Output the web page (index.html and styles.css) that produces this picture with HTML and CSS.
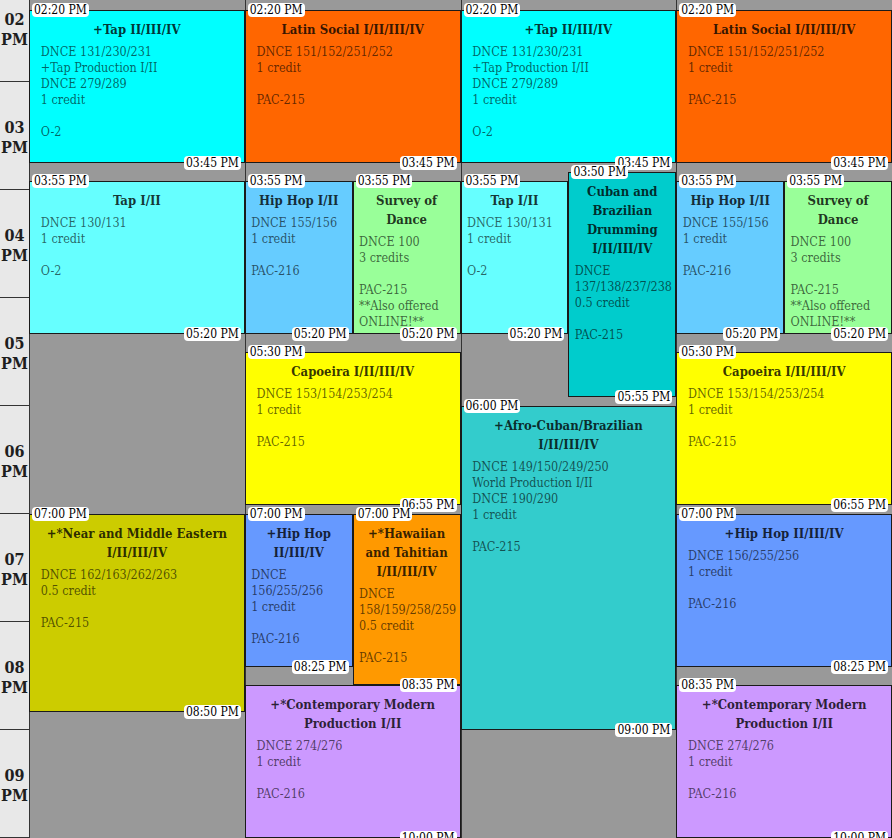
FILE: index.html
```html
<!DOCTYPE html>
<html lang="en">
<head>
<meta charset="utf-8">
<title>Dance Schedule</title>
<link rel="stylesheet" href="styles.css">
</head>
<body>
<div class="schedule">
  <div class="hour"><span>02</span><span>PM</span></div>
  <div class="hour"><span>03</span><span>PM</span></div>
  <div class="hour"><span>04</span><span>PM</span></div>
  <div class="hour"><span>05</span><span>PM</span></div>
  <div class="hour"><span>06</span><span>PM</span></div>
  <div class="hour"><span>07</span><span>PM</span></div>
  <div class="hour"><span>08</span><span>PM</span></div>
  <div class="hour"><span>09</span><span>PM</span></div>

  <div class="day d1"></div>
  <div class="day d2"></div>
  <div class="day d3"></div>
  <div class="day d4"></div>

  <div class="ev c-tap2" style="grid-row:5/22;grid-column:2/4">
    <span class="t s">02:20 PM</span>
    <div class="title">+Tap II/III/IV</div>
    <div class="info">DNCE 131/230/231<br>+Tap Production I/II<br>DNCE 279/289<br>1 credit<br><br>O-2</div>
    <span class="t e">03:45 PM</span>
  </div>
  <div class="ev c-latin" style="grid-row:5/22;grid-column:4/6">
    <span class="t s">02:20 PM</span>
    <div class="title">Latin Social I/II/III/IV</div>
    <div class="info">DNCE 151/152/251/252<br>1 credit<br><br>PAC-215</div>
    <span class="t e">03:45 PM</span>
  </div>
  <div class="ev c-tap2" style="grid-row:5/22;grid-column:6/8">
    <span class="t s">02:20 PM</span>
    <div class="title">+Tap II/III/IV</div>
    <div class="info">DNCE 131/230/231<br>+Tap Production I/II<br>DNCE 279/289<br>1 credit<br><br>O-2</div>
    <span class="t e">03:45 PM</span>
  </div>
  <div class="ev c-latin" style="grid-row:5/22;grid-column:8/10">
    <span class="t s">02:20 PM</span>
    <div class="title">Latin Social I/II/III/IV</div>
    <div class="info">DNCE 151/152/251/252<br>1 credit<br><br>PAC-215</div>
    <span class="t e">03:45 PM</span>
  </div>

  <div class="ev c-tap1" style="grid-row:24/41;grid-column:2/4">
    <span class="t s">03:55 PM</span>
    <div class="title">Tap I/II</div>
    <div class="info">DNCE 130/131<br>1 credit<br><br>O-2</div>
    <span class="t e">05:20 PM</span>
  </div>
  <div class="ev c-hh1" style="grid-row:24/41;grid-column:4/5">
    <span class="t s">03:55 PM</span>
    <div class="title">Hip Hop I/II</div>
    <div class="info">DNCE 155/156<br>1 credit<br><br>PAC-216</div>
    <span class="t e">05:20 PM</span>
  </div>
  <div class="ev c-survey" style="grid-row:24/41;grid-column:5/6">
    <span class="t s">03:55 PM</span>
    <div class="title">Survey of<br>Dance</div>
    <div class="info">DNCE 100<br>3 credits<br><br>PAC-215<br>**Also offered ONLINE!**</div>
    <span class="t e">05:20 PM</span>
  </div>
  <div class="ev c-tap1" style="grid-row:24/41;grid-column:6/7">
    <span class="t s">03:55 PM</span>
    <div class="title">Tap I/II</div>
    <div class="info">DNCE 130/131<br>1 credit<br><br>O-2</div>
    <span class="t e">05:20 PM</span>
  </div>
  <div class="ev c-cuban" style="grid-row:23/48;grid-column:7/8">
    <span class="t s">03:50 PM</span>
    <div class="title">Cuban and<br>Brazilian<br>Drumming<br>I/II/III/IV</div>
    <div class="info">DNCE<br>137/138/237/238<br>0.5 credit<br><br>PAC-215</div>
    <span class="t e">05:55 PM</span>
  </div>
  <div class="ev c-hh1" style="grid-row:24/41;grid-column:8/9">
    <span class="t s">03:55 PM</span>
    <div class="title">Hip Hop I/II</div>
    <div class="info">DNCE 155/156<br>1 credit<br><br>PAC-216</div>
    <span class="t e">05:20 PM</span>
  </div>
  <div class="ev c-survey" style="grid-row:24/41;grid-column:9/10">
    <span class="t s">03:55 PM</span>
    <div class="title">Survey of<br>Dance</div>
    <div class="info">DNCE 100<br>3 credits<br><br>PAC-215<br>**Also offered ONLINE!**</div>
    <span class="t e">05:20 PM</span>
  </div>

  <div class="ev c-capo" style="grid-row:43/60;grid-column:4/6">
    <span class="t s">05:30 PM</span>
    <div class="title">Capoeira I/II/III/IV</div>
    <div class="info">DNCE 153/154/253/254<br>1 credit<br><br>PAC-215</div>
    <span class="t e">06:55 PM</span>
  </div>
  <div class="ev c-capo" style="grid-row:43/60;grid-column:8/10">
    <span class="t s">05:30 PM</span>
    <div class="title">Capoeira I/II/III/IV</div>
    <div class="info">DNCE 153/154/253/254<br>1 credit<br><br>PAC-215</div>
    <span class="t e">06:55 PM</span>
  </div>
  <div class="ev c-afro" style="grid-row:49/85;grid-column:6/8">
    <span class="t s">06:00 PM</span>
    <div class="title">+Afro-Cuban/Brazilian<br>I/II/III/IV</div>
    <div class="info">DNCE 149/150/249/250<br>World Production I/II<br>DNCE 190/290<br>1 credit<br><br>PAC-215</div>
    <span class="t e">09:00 PM</span>
  </div>

  <div class="ev c-near" style="grid-row:61/83;grid-column:2/4">
    <span class="t s">07:00 PM</span>
    <div class="title">+*Near and Middle Eastern<br>I/II/III/IV</div>
    <div class="info">DNCE 162/163/262/263<br>0.5 credit<br><br>PAC-215</div>
    <span class="t e">08:50 PM</span>
  </div>
  <div class="ev c-hh2" style="grid-row:61/78;grid-column:4/5">
    <span class="t s">07:00 PM</span>
    <div class="title">+Hip Hop<br>II/III/IV</div>
    <div class="info">DNCE<br>156/255/256<br>1 credit<br><br>PAC-216</div>
    <span class="t e">08:25 PM</span>
  </div>
  <div class="ev c-haw" style="grid-row:61/80;grid-column:5/6">
    <span class="t s">07:00 PM</span>
    <div class="title">+*Hawaiian<br>and Tahitian<br>I/II/III/IV</div>
    <div class="info">DNCE<br>158/159/258/259<br>0.5 credit<br><br>PAC-215</div>
    <span class="t e">08:35 PM</span>
  </div>
  <div class="ev c-hh2" style="grid-row:61/78;grid-column:8/10">
    <span class="t s">07:00 PM</span>
    <div class="title">+Hip Hop II/III/IV</div>
    <div class="info">DNCE 156/255/256<br>1 credit<br><br>PAC-216</div>
    <span class="t e">08:25 PM</span>
  </div>

  <div class="ev c-cont" style="grid-row:80/97;grid-column:4/6">
    <div class="title">+*Contemporary Modern<br>Production I/II</div>
    <div class="info">DNCE 274/276<br>1 credit<br><br>PAC-216</div>
    <span class="t e">10:00 PM</span>
  </div>
  <div class="ev c-cont" style="grid-row:80/97;grid-column:8/10">
    <span class="t s">08:35 PM</span>
    <div class="title">+*Contemporary Modern<br>Production I/II</div>
    <div class="info">DNCE 274/276<br>1 credit<br><br>PAC-216</div>
    <span class="t e">10:00 PM</span>
  </div>
</div>
</body>
</html>
```

FILE: styles.css
```css
html, body {
  margin: 0;
  padding: 0;
}

body {
  height: 838px;
  overflow: hidden;
  background: #999999;
  font-family: "DejaVu Serif Condensed", "DejaVu Serif", serif;
  font-stretch: condensed;
}

.schedule {
  display: grid;
  grid-template-columns: 29px repeat(8, 1fr);
  grid-template-rows: repeat(96, 9px);
  margin-top: -26px;
}

.hour {
  grid-column: 1;
  grid-row: span 12;
  box-sizing: border-box;
  padding-top: 5px;
  background: #e8e8e8;
  border-bottom: 1px solid #333;
  display: flex;
  flex-direction: column;
  align-items: center;
  justify-content: center;
  font-weight: bold;
  font-size: 16px;
  line-height: 20px;
  color: #1e1e1e;
}

.day {
  grid-row: 1 / -1;
  background: #999999;
  border-left: 1px solid #333;
}
.d1 { grid-column: 2 / 4; }
.d2 { grid-column: 4 / 6; }
.d3 { grid-column: 6 / 8; }
.d4 { grid-column: 8 / 10; }

.ev {
  position: relative;
  box-sizing: border-box;
  min-width: 0;
  border: 1px solid #1a1a1a;
  padding: 9px 5% 0;
}

.title {
  font-weight: bold;
  font-size: 13px;
  line-height: 19px;
  text-align: center;
  color: rgba(0, 0, 0, 0.8);
}

.info {
  margin-top: 5px;
  font-size: 12.5px;
  line-height: 16px;
  color: rgba(0, 0, 0, 0.62);
}

.t {
  position: absolute;
  z-index: 2;
  background: #fff;
  border-radius: 4px;
  padding: 0 2px;
  font-size: 12px;
  line-height: 14px;
  color: #000;
  white-space: nowrap;
}
.t.s { top: -8px; left: 2px; }
.t.e { bottom: -8px; right: 3px; }

.c-tap2 { background: #00ffff; }
.c-tap1 { background: #66ffff; }
.c-latin { background: #ff6600; }
.c-hh1 { background: #66ccff; }
.c-survey { background: #99ff99; }
.c-cuban { background: #00cccc; }
.c-capo { background: #ffff00; }
.c-afro { background: #33cccc; }
.c-near { background: #cccc00; }
.c-hh2 { background: #6699ff; }
.c-haw { background: #ff9900; }
.c-cont { background: #cc99ff; }
```
